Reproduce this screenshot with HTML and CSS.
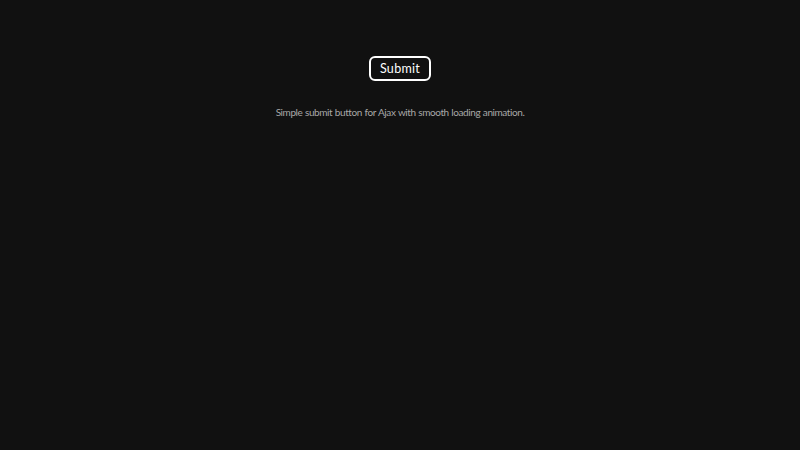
FILE: index.html
```html
<!DOCTYPE html>
<html>
<head>
<meta charset="utf-8">
<link rel="stylesheet" href="styles.css">
</head>
<body>
<main class="page">
  <button class="submit">Submit</button>
  <p class="caption">Simple submit button for Ajax with smooth loading animation.</p>
</main>
</body>
</html>
```
FILE: styles.css
```css
html, body {
  margin: 0;
  padding: 0;
  background: #111111;
  height: 100%;
}
.page {
  display: flex;
  flex-direction: column;
  align-items: center;
  padding-top: 56px;
  font-family: Lato, "Open Sans", sans-serif;
}
.submit {
  box-sizing: border-box;
  width: 62px;
  height: 25px;
  border: 2px solid #ffffff;
  border-radius: 6px;
  background: transparent;
  color: #ffffff;
  font-family: Lato, "Open Sans", sans-serif;
  font-weight: 400;
  font-size: 12.5px;
  padding: 0;
  letter-spacing: 0.3px;
}
.caption {
  margin: 25px 0 0;
  color: #a8a8a8;
  font-size: 10px;
  line-height: 12px;
  letter-spacing: -0.42px;
  word-spacing: 0.5px;
}
```
